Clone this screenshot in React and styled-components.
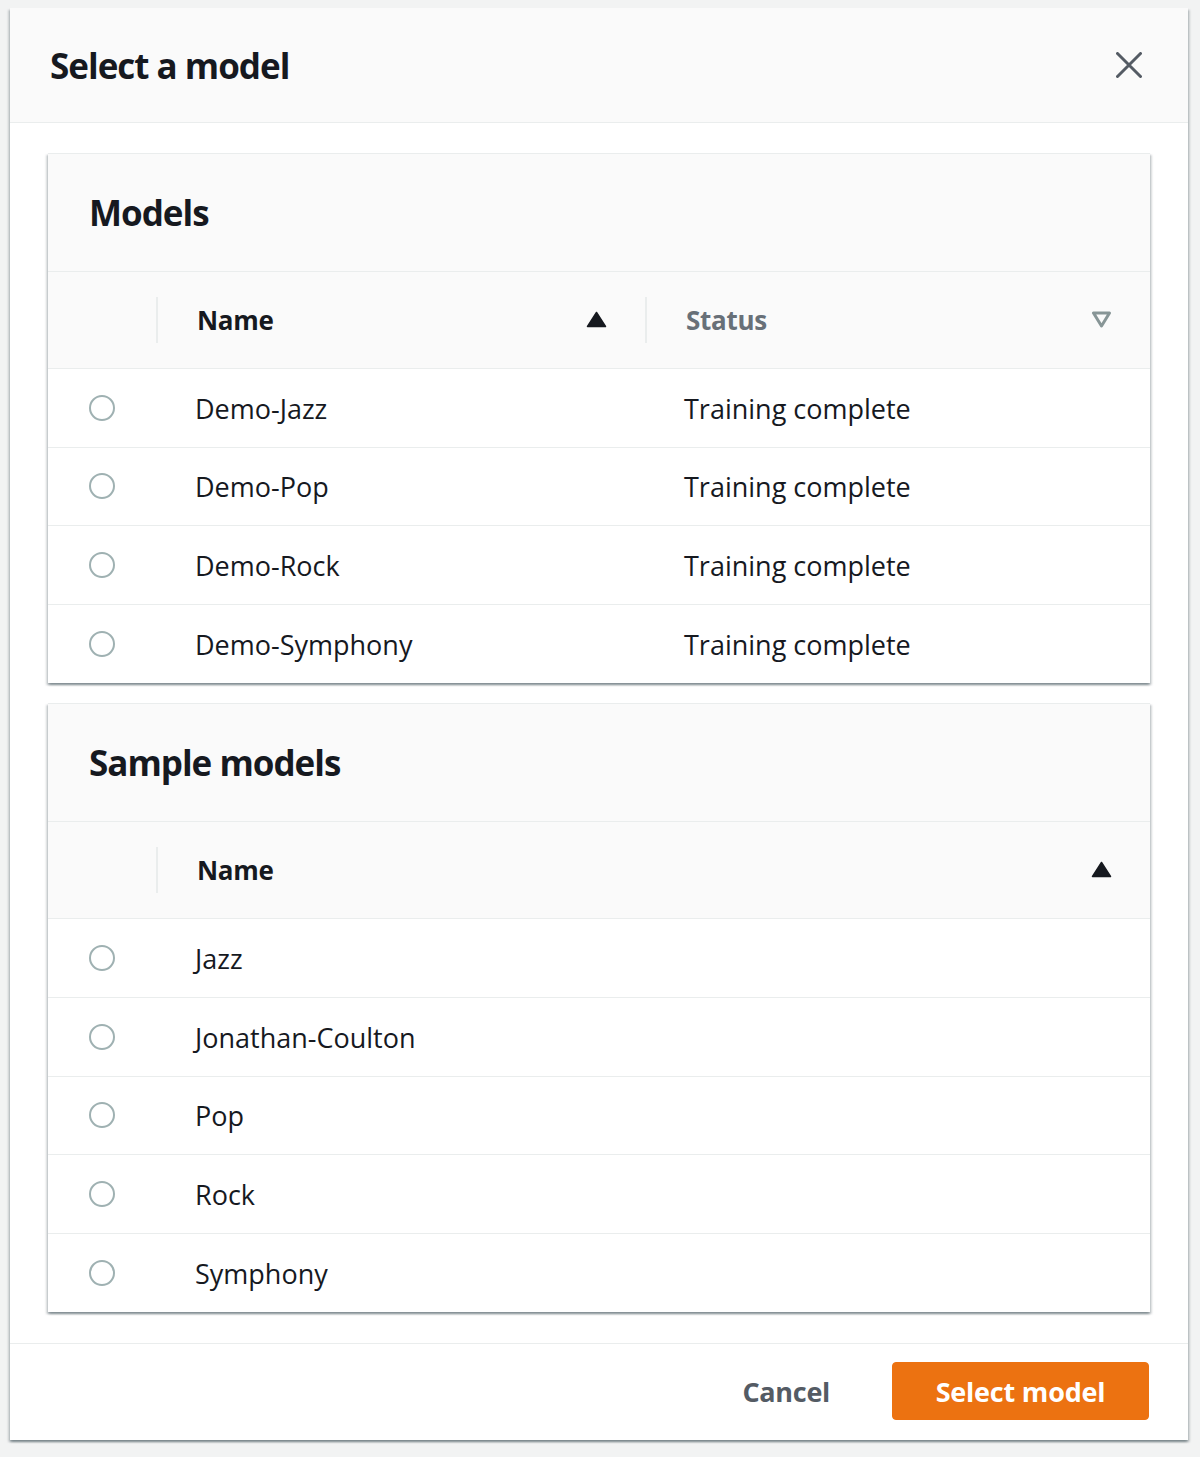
import React, { useState } from "react";
import styled, { createGlobalStyle } from "styled-components";

const GlobalStyle = createGlobalStyle`
  html, body {
    margin: 0;
    padding: 0;
    background: #f2f3f3;
    font-family: "Open Sans", "Noto Sans", "Liberation Sans", sans-serif;
    color: #16191f;
  }
  * {
    box-sizing: border-box;
  }
`;

const Page = styled.div`
  width: 1200px;
  height: 1457px;
  padding: 8px 12px 0 10px;
  background: #f2f3f3;
`;

const Modal = styled.div`
  width: 1178px;
  height: 1432px;
  background: #ffffff;
  display: flex;
  flex-direction: column;
  box-shadow: 0 2px 2px 0 rgba(0, 28, 36, 0.3), 2px 2px 2px 0 rgba(0, 28, 36, 0.15),
    -2px 2px 2px 0 rgba(0, 28, 36, 0.15);
`;

const ModalHeader = styled.div`
  height: 115px;
  flex: none;
  display: flex;
  align-items: center;
  justify-content: space-between;
  padding: 0 46px 0 40px;
  background: #fafafa;
  border-bottom: 1px solid #eaeded;
`;

const Title = styled.h1`
  margin: 0;
  font-size: 35px;
  font-weight: 700;
  letter-spacing: -1px;
  line-height: 1;
`;

const CloseButton = styled.button`
  width: 26px;
  height: 26px;
  padding: 0;
  border: none;
  background: none;
  cursor: pointer;
  display: flex;

  svg {
    width: 26px;
    height: 26px;
  }
`;

const ModalBody = styled.div`
  flex: 1;
  display: flex;
  flex-direction: column;
  gap: 20px;
  padding: 30px 38px 31px;
  border-bottom: 1px solid #eaeded;
`;

const Container = styled.section`
  background: #ffffff;
  border-top: 1px solid #eaeded;
  box-shadow: 0 2px 2px 0 rgba(0, 28, 36, 0.3), 2px 2px 2px 0 rgba(0, 28, 36, 0.15),
    -2px 2px 2px 0 rgba(0, 28, 36, 0.15);
`;

const ContainerHeader = styled.div`
  height: 118px;
  display: flex;
  align-items: center;
  padding: 0 41px;
  background: #fafafa;
  border-bottom: 1px solid #eaeded;
`;

const ContainerTitle = styled.h2`
  margin: 0;
  font-size: 35px;
  font-weight: 700;
  letter-spacing: -1px;
  line-height: 1;
`;

const Row = styled.div`
  display: grid;
  grid-template-columns: ${(p) => p.$columns};
  align-items: center;
  height: ${(p) => (p.$head ? "97px" : "78.6px")};
  background: ${(p) => (p.$head ? "#fafafa" : "#ffffff")};
  border-bottom: ${(p) => (p.$last ? "none" : "1px solid #eaeded")};
`;

const HeadCell = styled.div`
  position: relative;
  height: 100%;
  display: flex;
  align-items: center;
  justify-content: space-between;
  padding: 0 38px 0 41px;
  font-size: 26px;
  font-weight: 700;
  letter-spacing: -0.3px;
  color: ${(p) => (p.$muted ? "#687078" : "#16191f")};

  &::before {
    content: ${(p) => (p.$divider ? '""' : "none")};
    position: absolute;
    left: 0;
    top: 25px;
    bottom: 25px;
    width: 2px;
    background: #eaeded;
  }
`;

const Cell = styled.div`
  padding-left: 39px;
  font-size: 27px;
  line-height: 1;
  padding-top: 1px;
`;

const RadioCell = styled.div`
  padding-left: 41px;
  display: flex;
  align-items: center;
`;

const Radio = styled.span`
  display: block;
  width: 26px;
  height: 26px;
  border-radius: 50%;
  border: 2px solid ${(p) => (p.$checked ? "#0073bb" : "#9fb1b2")};
  background: #ffffff;
  cursor: pointer;
  box-shadow: ${(p) => (p.$checked ? "inset 0 0 0 6px #0073bb" : "none")};
`;

const SortIcon = styled.svg`
  width: 21px;
  height: 17px;
  flex: none;
  margin-top: -2px;
`;

const ModalFooter = styled.div`
  height: 98px;
  flex: none;
  display: flex;
  align-items: flex-start;
  justify-content: flex-end;
  gap: 62px;
  padding: 18px 39px 0 0;
`;

const LinkButton = styled.button`
  height: 58px;
  border: none;
  background: none;
  padding: 0;
  font-family: inherit;
  font-size: 27px;
  font-weight: 700;
  letter-spacing: -0.3px;
  color: #545b64;
  cursor: pointer;
`;

const PrimaryButton = styled.button`
  width: 257px;
  height: 58px;
  border: 1px solid #ec7211;
  border-radius: 4px;
  background: #ec7211;
  padding: 0;
  font-family: inherit;
  font-size: 27px;
  font-weight: 700;
  letter-spacing: -0.2px;
  color: #ffffff;
  cursor: pointer;
`;

const SortUp = () => (
  <SortIcon viewBox="0 0 21 17">
    <path d="M10.5 1.5 L19.5 15.5 L1.5 15.5 Z" fill="#16191f" stroke="#16191f" strokeWidth="1.5" strokeLinejoin="round" />
  </SortIcon>
);

const SortNone = () => (
  <SortIcon viewBox="0 0 21 17">
    <path d="M2.5 2 L18.5 2 L10.5 15 Z" fill="none" stroke="#879596" strokeWidth="3" strokeLinejoin="round" />
  </SortIcon>
);

const models = ["Demo-Jazz", "Demo-Pop", "Demo-Rock", "Demo-Symphony"];
const samples = ["Jazz", "Jonathan-Coulton", "Pop", "Rock", "Symphony"];

export default function App() {
  const [selected, setSelected] = useState(null);

  return (
    <Page>
      <GlobalStyle />
      <Modal>
        <ModalHeader>
          <Title>Select a model</Title>
          <CloseButton aria-label="Close">
            <svg viewBox="0 0 26 26">
              <path d="M1.5 1.5 L24.5 24.5 M24.5 1.5 L1.5 24.5" stroke="#545b64" strokeWidth="3" strokeLinecap="round" />
            </svg>
          </CloseButton>
        </ModalHeader>

        <ModalBody>
          <Container>
            <ContainerHeader>
              <ContainerTitle>Models</ContainerTitle>
            </ContainerHeader>
            <Row $head $columns="108px 489px 1fr">
              <div />
              <HeadCell $divider>
                Name
                <SortUp />
              </HeadCell>
              <HeadCell $divider $muted>
                Status
                <SortNone />
              </HeadCell>
            </Row>
            {models.map((name, i) => (
              <Row key={name} $columns="108px 489px 1fr" $last={i === models.length - 1}>
                <RadioCell>
                  <Radio $checked={selected === name} onClick={() => setSelected(name)} />
                </RadioCell>
                <Cell>{name}</Cell>
                <Cell>Training complete</Cell>
              </Row>
            ))}
          </Container>

          <Container>
            <ContainerHeader>
              <ContainerTitle>Sample models</ContainerTitle>
            </ContainerHeader>
            <Row $head $columns="108px 1fr">
              <div />
              <HeadCell $divider>
                Name
                <SortUp />
              </HeadCell>
            </Row>
            {samples.map((name, i) => (
              <Row key={name} $columns="108px 1fr" $last={i === samples.length - 1}>
                <RadioCell>
                  <Radio $checked={selected === name} onClick={() => setSelected(name)} />
                </RadioCell>
                <Cell>{name}</Cell>
              </Row>
            ))}
          </Container>
        </ModalBody>

        <ModalFooter>
          <LinkButton>Cancel</LinkButton>
          <PrimaryButton>Select model</PrimaryButton>
        </ModalFooter>
      </Modal>
    </Page>
  );
}
